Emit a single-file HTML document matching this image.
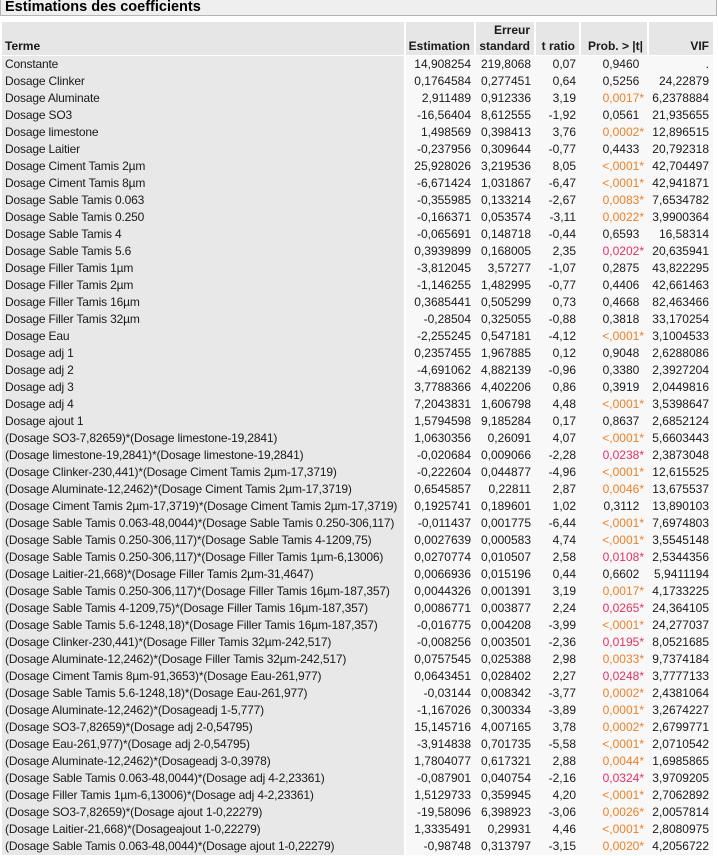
<!DOCTYPE html>
<html><head><meta charset="utf-8"><style>
body{margin:0;width:718px;height:856px;background:#fff;font-family:"Liberation Sans",sans-serif;overflow:hidden;position:relative}
.title{position:absolute;left:0;top:0;width:711px;height:15px;border:1px solid #b4b4b4;border-top:none;background:#efefef;font-weight:bold;font-size:14.5px;line-height:14px;padding-left:4px;color:#000}
table{position:absolute;left:2px;top:22px;width:711px;border-collapse:collapse;table-layout:fixed;font-size:12px;color:#1a1a1a}
td,th{padding:0 4px 0 0;height:17px;line-height:17px;white-space:nowrap;overflow:hidden}
th{background:#e6e6e6;font-weight:bold;vertical-align:bottom;text-align:right;line-height:16px;border-left:2px solid #fff;border-bottom:1px solid #fff;padding-bottom:1px}
th.t{text-align:left;border-left:none;padding-left:3px}
td{background:#f8f8f8;text-align:right}
td.t{background:#e8e8e8;text-align:left;padding-left:3px;letter-spacing:-0.17px;border-right:2px solid #fff}
.o{color:#f08020}.r{color:#e83060}.h{visibility:hidden}
</style></head><body>
<div class="title">Estimations des coefficients</div>
<table>
<colgroup><col style="width:403px"><col style="width:70px"><col style="width:60px"><col style="width:45px"><col style="width:68px"><col style="width:65px"></colgroup>
<tr style="height:33px"><th class="t">Terme</th><th>Estimation</th><th>Erreur<br>standard</th><th>t ratio</th><th>Prob. &gt; |t|</th><th>VIF</th></tr>
<tr><td class="t">Constante</td><td>14,908254</td><td>219,8068</td><td>0,07</td><td>0,9460<span class="h">*</span></td><td>.</td></tr>
<tr><td class="t">Dosage Clinker</td><td>0,1764584</td><td>0,277451</td><td>0,64</td><td>0,5256<span class="h">*</span></td><td>24,22879</td></tr>
<tr><td class="t">Dosage Aluminate</td><td>2,911489</td><td>0,912336</td><td>3,19</td><td class="o">0,0017*</td><td>6,2378884</td></tr>
<tr><td class="t">Dosage SO3</td><td>-16,56404</td><td>8,612555</td><td>-1,92</td><td>0,0561<span class="h">*</span></td><td>21,935655</td></tr>
<tr><td class="t">Dosage limestone</td><td>1,498569</td><td>0,398413</td><td>3,76</td><td class="o">0,0002*</td><td>12,896515</td></tr>
<tr><td class="t">Dosage Laitier</td><td>-0,237956</td><td>0,309644</td><td>-0,77</td><td>0,4433<span class="h">*</span></td><td>20,792318</td></tr>
<tr><td class="t">Dosage Ciment Tamis 2µm</td><td>25,928026</td><td>3,219536</td><td>8,05</td><td class="o">&lt;,0001*</td><td>42,704497</td></tr>
<tr><td class="t">Dosage Ciment Tamis 8µm</td><td>-6,671424</td><td>1,031867</td><td>-6,47</td><td class="o">&lt;,0001*</td><td>42,941871</td></tr>
<tr><td class="t">Dosage Sable Tamis 0.063</td><td>-0,355985</td><td>0,133214</td><td>-2,67</td><td class="o">0,0083*</td><td>7,6534782</td></tr>
<tr><td class="t">Dosage Sable Tamis 0.250</td><td>-0,166371</td><td>0,053574</td><td>-3,11</td><td class="o">0,0022*</td><td>3,9900364</td></tr>
<tr><td class="t">Dosage Sable Tamis 4</td><td>-0,065691</td><td>0,148718</td><td>-0,44</td><td>0,6593<span class="h">*</span></td><td>16,58314</td></tr>
<tr><td class="t">Dosage Sable Tamis 5.6</td><td>0,3939899</td><td>0,168005</td><td>2,35</td><td class="r">0,0202*</td><td>20,635941</td></tr>
<tr><td class="t">Dosage Filler Tamis 1µm</td><td>-3,812045</td><td>3,57277</td><td>-1,07</td><td>0,2875<span class="h">*</span></td><td>43,822295</td></tr>
<tr><td class="t">Dosage Filler Tamis 2µm</td><td>-1,146255</td><td>1,482995</td><td>-0,77</td><td>0,4406<span class="h">*</span></td><td>42,661463</td></tr>
<tr><td class="t">Dosage Filler Tamis 16µm</td><td>0,3685441</td><td>0,505299</td><td>0,73</td><td>0,4668<span class="h">*</span></td><td>82,463466</td></tr>
<tr><td class="t">Dosage Filler Tamis 32µm</td><td>-0,28504</td><td>0,325055</td><td>-0,88</td><td>0,3818<span class="h">*</span></td><td>33,170254</td></tr>
<tr><td class="t">Dosage Eau</td><td>-2,255245</td><td>0,547181</td><td>-4,12</td><td class="o">&lt;,0001*</td><td>3,1004533</td></tr>
<tr><td class="t">Dosage adj 1</td><td>0,2357455</td><td>1,967885</td><td>0,12</td><td>0,9048<span class="h">*</span></td><td>2,6288086</td></tr>
<tr><td class="t">Dosage adj 2</td><td>-4,691062</td><td>4,882139</td><td>-0,96</td><td>0,3380<span class="h">*</span></td><td>2,3927204</td></tr>
<tr><td class="t">Dosage adj 3</td><td>3,7788366</td><td>4,402206</td><td>0,86</td><td>0,3919<span class="h">*</span></td><td>2,0449816</td></tr>
<tr><td class="t">Dosage adj 4</td><td>7,2043831</td><td>1,606798</td><td>4,48</td><td class="o">&lt;,0001*</td><td>3,5398647</td></tr>
<tr><td class="t">Dosage ajout 1</td><td>1,5794598</td><td>9,185284</td><td>0,17</td><td>0,8637<span class="h">*</span></td><td>2,6852124</td></tr>
<tr><td class="t">(Dosage SO3-7,82659)*(Dosage limestone-19,2841)</td><td>1,0630356</td><td>0,26091</td><td>4,07</td><td class="o">&lt;,0001*</td><td>5,6603443</td></tr>
<tr><td class="t">(Dosage limestone-19,2841)*(Dosage limestone-19,2841)</td><td>-0,020684</td><td>0,009066</td><td>-2,28</td><td class="r">0,0238*</td><td>2,3873048</td></tr>
<tr><td class="t">(Dosage Clinker-230,441)*(Dosage Ciment Tamis 2µm-17,3719)</td><td>-0,222604</td><td>0,044877</td><td>-4,96</td><td class="o">&lt;,0001*</td><td>12,615525</td></tr>
<tr><td class="t">(Dosage Aluminate-12,2462)*(Dosage Ciment Tamis 2µm-17,3719)</td><td>0,6545857</td><td>0,22811</td><td>2,87</td><td class="o">0,0046*</td><td>13,675537</td></tr>
<tr><td class="t">(Dosage Ciment Tamis 2µm-17,3719)*(Dosage Ciment Tamis 2µm-17,3719)</td><td>0,1925741</td><td>0,189601</td><td>1,02</td><td>0,3112<span class="h">*</span></td><td>13,890103</td></tr>
<tr><td class="t">(Dosage Sable Tamis 0.063-48,0044)*(Dosage Sable Tamis 0.250-306,117)</td><td>-0,011437</td><td>0,001775</td><td>-6,44</td><td class="o">&lt;,0001*</td><td>7,6974803</td></tr>
<tr><td class="t">(Dosage Sable Tamis 0.250-306,117)*(Dosage Sable Tamis 4-1209,75)</td><td>0,0027639</td><td>0,000583</td><td>4,74</td><td class="o">&lt;,0001*</td><td>3,5545148</td></tr>
<tr><td class="t">(Dosage Sable Tamis 0.250-306,117)*(Dosage Filler Tamis 1µm-6,13006)</td><td>0,0270774</td><td>0,010507</td><td>2,58</td><td class="r">0,0108*</td><td>2,5344356</td></tr>
<tr><td class="t">(Dosage Laitier-21,668)*(Dosage Filler Tamis 2µm-31,4647)</td><td>0,0066936</td><td>0,015196</td><td>0,44</td><td>0,6602<span class="h">*</span></td><td>5,9411194</td></tr>
<tr><td class="t">(Dosage Sable Tamis 0.250-306,117)*(Dosage Filler Tamis 16µm-187,357)</td><td>0,0044326</td><td>0,001391</td><td>3,19</td><td class="o">0,0017*</td><td>4,1733225</td></tr>
<tr><td class="t">(Dosage Sable Tamis 4-1209,75)*(Dosage Filler Tamis 16µm-187,357)</td><td>0,0086771</td><td>0,003877</td><td>2,24</td><td class="r">0,0265*</td><td>24,364105</td></tr>
<tr><td class="t">(Dosage Sable Tamis 5.6-1248,18)*(Dosage Filler Tamis 16µm-187,357)</td><td>-0,016775</td><td>0,004208</td><td>-3,99</td><td class="o">&lt;,0001*</td><td>24,277037</td></tr>
<tr><td class="t">(Dosage Clinker-230,441)*(Dosage Filler Tamis 32µm-242,517)</td><td>-0,008256</td><td>0,003501</td><td>-2,36</td><td class="r">0,0195*</td><td>8,0521685</td></tr>
<tr><td class="t">(Dosage Aluminate-12,2462)*(Dosage Filler Tamis 32µm-242,517)</td><td>0,0757545</td><td>0,025388</td><td>2,98</td><td class="o">0,0033*</td><td>9,7374184</td></tr>
<tr><td class="t">(Dosage Ciment Tamis 8µm-91,3653)*(Dosage Eau-261,977)</td><td>0,0643451</td><td>0,028402</td><td>2,27</td><td class="r">0,0248*</td><td>3,7777133</td></tr>
<tr><td class="t">(Dosage Sable Tamis 5.6-1248,18)*(Dosage Eau-261,977)</td><td>-0,03144</td><td>0,008342</td><td>-3,77</td><td class="o">0,0002*</td><td>2,4381064</td></tr>
<tr><td class="t">(Dosage Aluminate-12,2462)*(Dosageadj 1-5,777)</td><td>-1,167026</td><td>0,300334</td><td>-3,89</td><td class="o">0,0001*</td><td>3,2674227</td></tr>
<tr><td class="t">(Dosage SO3-7,82659)*(Dosage adj 2-0,54795)</td><td>15,145716</td><td>4,007165</td><td>3,78</td><td class="o">0,0002*</td><td>2,6799771</td></tr>
<tr><td class="t">(Dosage Eau-261,977)*(Dosage adj 2-0,54795)</td><td>-3,914838</td><td>0,701735</td><td>-5,58</td><td class="o">&lt;,0001*</td><td>2,0710542</td></tr>
<tr><td class="t">(Dosage Aluminate-12,2462)*(Dosageadj 3-0,3978)</td><td>1,7804077</td><td>0,617321</td><td>2,88</td><td class="o">0,0044*</td><td>1,6985865</td></tr>
<tr><td class="t">(Dosage Sable Tamis 0.063-48,0044)*(Dosage adj 4-2,23361)</td><td>-0,087901</td><td>0,040754</td><td>-2,16</td><td class="r">0,0324*</td><td>3,9709205</td></tr>
<tr><td class="t">(Dosage Filler Tamis 1µm-6,13006)*(Dosage adj 4-2,23361)</td><td>1,5129733</td><td>0,359945</td><td>4,20</td><td class="o">&lt;,0001*</td><td>2,7062892</td></tr>
<tr><td class="t">(Dosage SO3-7,82659)*(Dosage ajout 1-0,22279)</td><td>-19,58096</td><td>6,398923</td><td>-3,06</td><td class="o">0,0026*</td><td>2,0057814</td></tr>
<tr><td class="t">(Dosage Laitier-21,668)*(Dosageajout 1-0,22279)</td><td>1,3335491</td><td>0,29931</td><td>4,46</td><td class="o">&lt;,0001*</td><td>2,8080975</td></tr>
<tr><td class="t">(Dosage Sable Tamis 0.063-48,0044)*(Dosage ajout 1-0,22279)</td><td>-0,98748</td><td>0,313797</td><td>-3,15</td><td class="o">0,0020*</td><td>4,2056722</td></tr>
</table>
</body></html>
